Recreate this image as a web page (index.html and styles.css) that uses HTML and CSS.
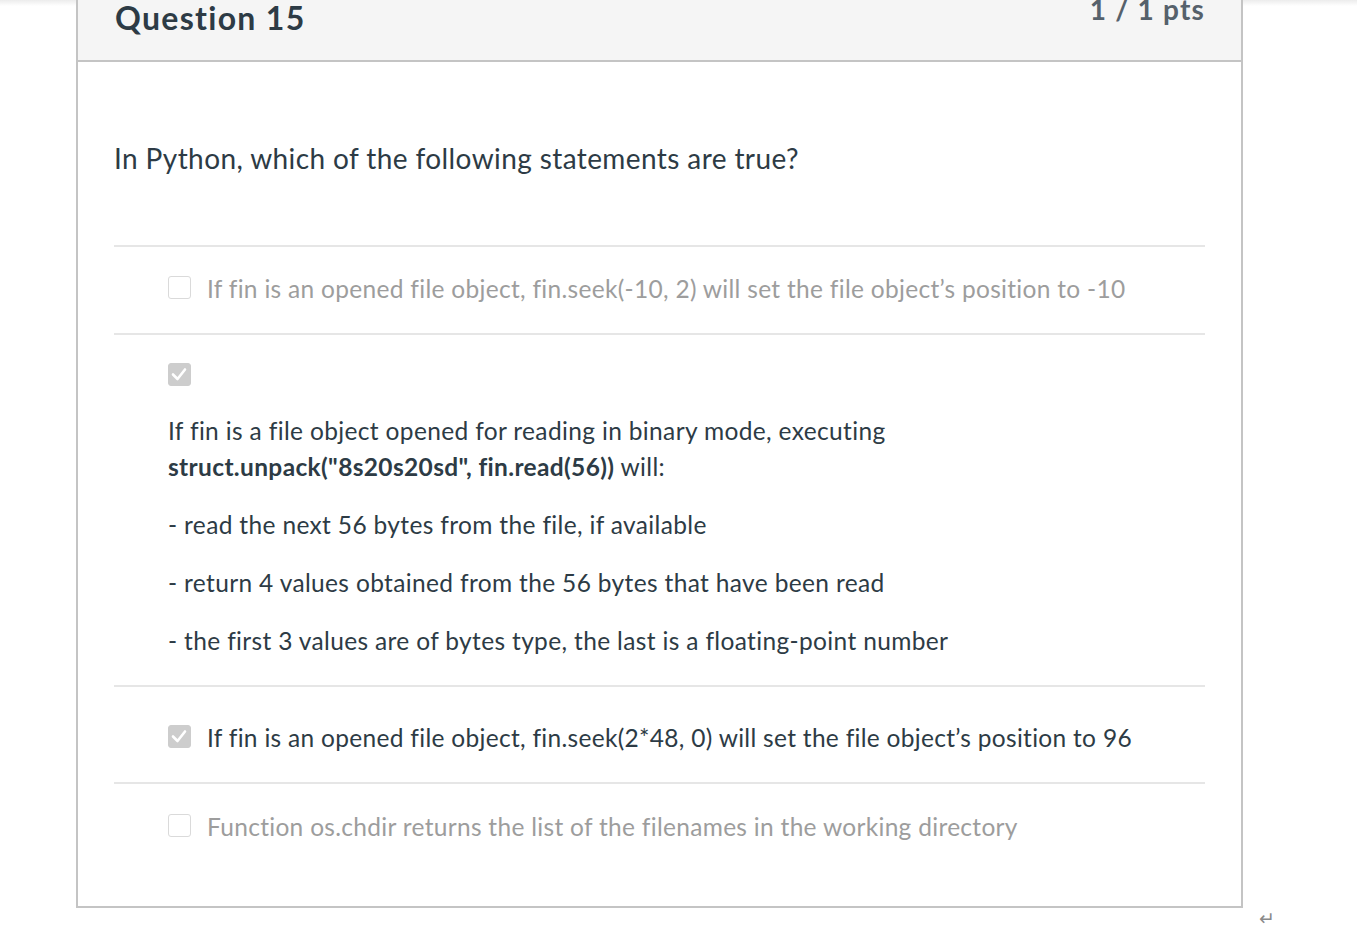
FILE: index.html
```html
<!DOCTYPE html>
<html>
<head>
<meta charset="utf-8">
<link rel="stylesheet" href="styles.css">
</head>
<body>
<div class="page">
  <div class="card">
    <div class="header">
      <h2 class="title">Question 15</h2>
      <div class="pts">1 / 1 pts</div>
    </div>
    <div class="body">
      <p class="question">In Python, which of the following statements are true?</p>
      <div class="answers">
        <div class="answer inline first">
          <span class="box"></span>
          <span class="text muted">If fin is an opened file object, fin.seek(-10, 2) will set the file object’s position to -10</span>
        </div>
        <div class="answer block">
          <span class="box checked"><svg viewBox="0 0 22 22" width="22" height="22"><path d="M5 11.5 L9.5 16 L17 6.5" fill="none" stroke="#fff" stroke-width="2.6" stroke-linecap="round" stroke-linejoin="round"/></svg></span>
          <div class="rich">
            <p class="lead">If fin is a file object opened for reading in binary mode, executing<br><strong>struct.unpack("8s20s20sd", fin.read(56))</strong> will:</p>
            <p>- read the next 56 bytes from the file, if available</p>
            <p>- return 4 values obtained from the 56 bytes that have been read</p>
            <p>- the first 3 values are of bytes type, the last is a floating-point number</p>
          </div>
        </div>
        <div class="answer inline tall">
          <span class="box checked"><svg viewBox="0 0 22 22" width="22" height="22"><path d="M5 11.5 L9.5 16 L17 6.5" fill="none" stroke="#fff" stroke-width="2.6" stroke-linecap="round" stroke-linejoin="round"/></svg></span>
          <span class="text">If fin is an opened file object, fin.seek(2*48, 0) will set the file object’s position to 96</span>
        </div>
        <div class="answer inline last">
          <span class="box"></span>
          <span class="text muted">Function os.chdir returns the list of the filenames in the working directory</span>
        </div>
      </div>
    </div>
  </div>
  <div class="footer"><span class="ret">↵</span></div>
</div>
</body>
</html>
```
FILE: styles.css
```css
* { box-sizing: border-box; }
html, body {
  margin: 0;
  padding: 0;
  background: #ffffff;
  font-family: Lato, "Open Sans", sans-serif;
  color: #2d3b45;
}
body { overflow: hidden; }
.page {
  display: flow-root;
  width: 1357px;
  min-height: 926px;
  background: linear-gradient(#ececec, #ffffff 6px);
}
.card {
  margin-left: 76px;
  margin-top: -24px;
  width: 1167px;
  border: 2px solid #c4c4c4;
  background: #ffffff;
}
.header {
  height: 84px;
  background: #f5f5f5;
  border-bottom: 2px solid #c4c4c4;
  display: flex;
  justify-content: space-between;
  padding: 0 36px 0 37px;
}
.title {
  margin: 0;
  padding-top: 21px;
  font-size: 32px;
  font-weight: 700;
  letter-spacing: 1.3px;
  line-height: 38px;
  color: #2d3b45;
}
.pts {
  padding-top: 15px;
  font-size: 28px;
  font-weight: 700;
  letter-spacing: 1.2px;
  line-height: 32px;
  color: #56616b;
}
.body {
  padding: 0 36px;
}
.question {
  margin: 0;
  padding-top: 76px;
  height: 183px;
  font-size: 28px;
  letter-spacing: 0.4px;
  line-height: 40px;
}
.answers {
  border-top: 2px solid #e6e6e6;
}
.answer {
  border-bottom: 2px solid #e6e6e6;
  padding-left: 54px;
}
.answer.inline {
  display: flex;
  align-items: flex-start;
  gap: 16px;
  height: 88px;
  padding-top: 26px;
}
.answer.inline.first { padding-top: 27px; }
.answer.tall { height: 97px; padding-top: 36px; }
.answer.inline.last { border-bottom: none; height: 122px; padding-top: 28px; }
.box {
  flex: none;
  width: 23px;
  height: 23px;
  margin-top: 2px;
  border: 1.5px solid #dadada;
  border-radius: 3px;
  background: #ffffff;
  display: block;
}
.box.checked {
  background: #cdcdcd;
  border-color: #cdcdcd;
  position: relative;
}
.box.checked svg {
  position: absolute;
  left: -1px;
  top: -1px;
}
.text {
  font-size: 24.5px;
  letter-spacing: 0.3px;
  line-height: 30px;
  color: #2d3b45;
}
.text.muted { color: #9d9d9d; }
.answer.block {
  padding-top: 26px;
  padding-bottom: 26px;
}
.rich {
  margin-top: 27px;
  font-size: 24.5px;
  letter-spacing: 0.35px;
  color: #2d3b45;
}
.rich p {
  margin: 0 0 22px 0;
  line-height: 36px;
}
.rich p:last-child { margin-bottom: 0; }
.rich strong { font-weight: 700; }
.footer {
  display: flex;
  justify-content: flex-end;
  padding-right: 82px;
}
.ret {
  font-family: "DejaVu Sans", sans-serif;
  font-size: 19px;
  line-height: 16px;
  color: #8a8a8a;
  margin-top: 2px;
}
```
